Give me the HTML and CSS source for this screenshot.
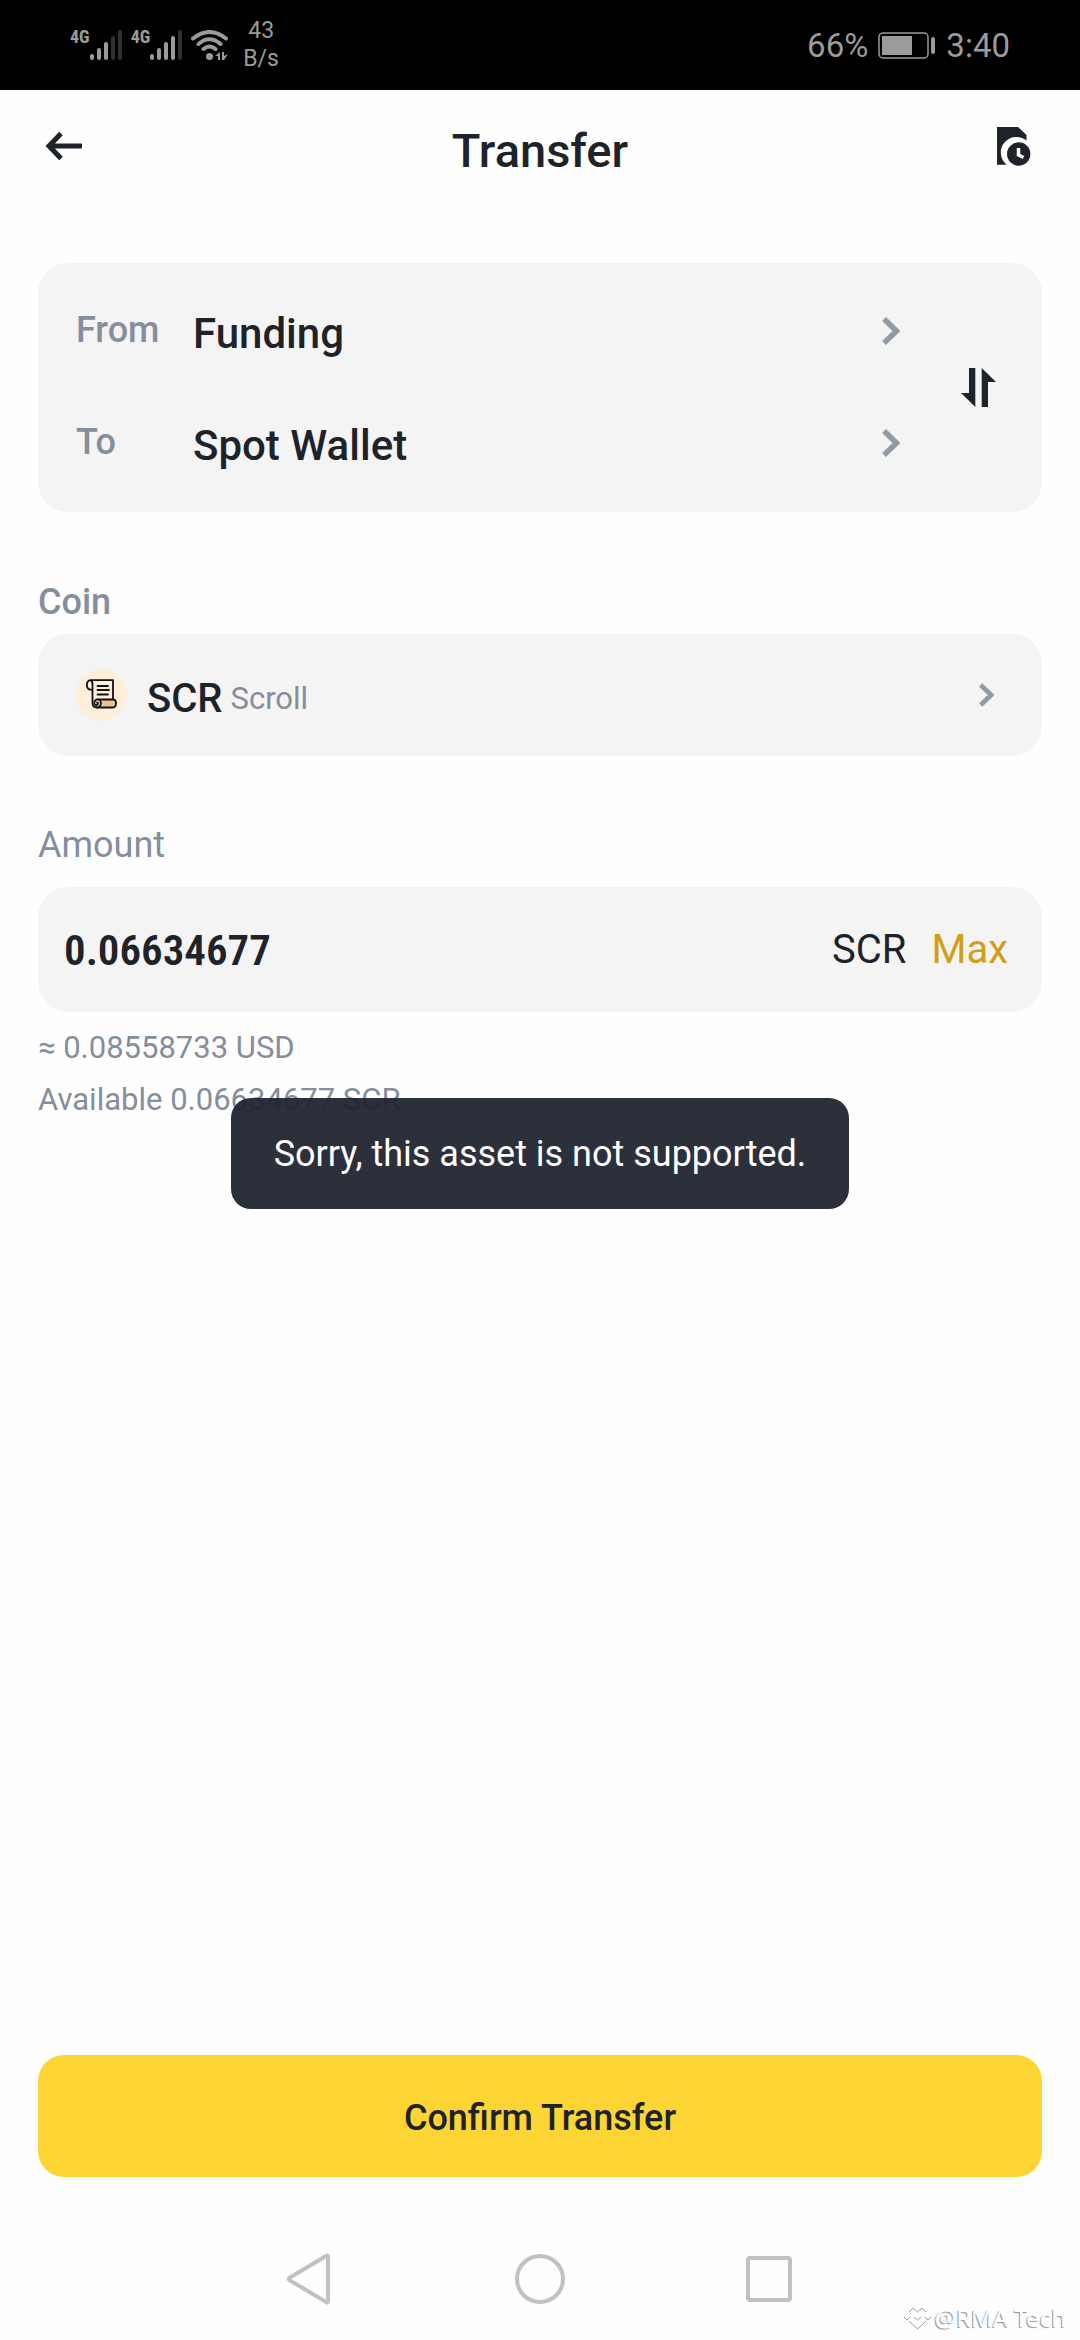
FILE: index.html
```html
<!DOCTYPE html>
<html lang="en">
<head>
<meta charset="utf-8">
<meta name="viewport" content="width=device-width">
<title>Transfer</title>
<link rel="stylesheet" href="styles.css">
</head>
<body>
<div class="screen">
  <div class="status">
    <div class="status-group">
      <div class="signal">
        <span class="network">4G</span>
        <svg width="33" height="30" viewBox="0 0 33 30">
          <g stroke="#9b9b9b" stroke-width="4" stroke-linecap="round"><path d="M2 26v2M9 20v8M16 14v14"/><path stroke="#303030" d="M23 8v20M30 2v26"/></g>
        </svg>
      </div>
      <div class="signal">
        <span class="network">4G</span>
        <svg width="33" height="30" viewBox="0 0 33 30">
          <g stroke="#9b9b9b" stroke-width="4" stroke-linecap="round"><path d="M2 26v2M9 20v8M16 14v14M23 8v20"/><path stroke="#303030" d="M30 2v26"/></g>
        </svg>
      </div>
      <svg width="38" height="30" viewBox="0 0 38 30">
        <g fill="none" stroke="#9b9b9b" stroke-width="4" stroke-linecap="round"><path d="M2 8.500Q18.500-4.500 35 8.500M7.500 14Q18.500 4.500 29.500 14M12.500 19Q18.500 14 24.500 19"/></g>
        <circle cx="18.500" cy="26.500" r="3.500" fill="#9b9b9b"/>
        <path fill="#9b9b9b" d="M24 26l5-4v8h-2v-4zM31 22h2v4l4-2-4 6h-2z"/>
      </svg>
      <div class="speed"><span>43</span><span>B/s</span></div>
    </div>
    <div class="status-group status-right">
      <span>66%</span>
      <svg width="58" height="27" viewBox="0 0 58 27">
        <rect x="1" y="1" width="49" height="25" rx="4" fill="none" stroke="#9b9b9b" stroke-width="1.500"/>
        <rect x="4" y="4" width="30" height="19" fill="#9b9b9b"/>
        <rect x="53" y="5" width="4" height="17" rx="2" fill="#9b9b9b"/>
      </svg>
      <span>3:40</span>
    </div>
  </div>

  <header class="header">
    <button class="icon-button" aria-label="Back">
      <svg width="40" height="38" viewBox="0 0 40 38"><path d="M18 2.500L6 15l12 12.500M5 15h34" fill="none" stroke="#1e2329" stroke-width="5"/></svg>
    </button>
    <h1 class="title">Transfer</h1>
    <button class="icon-button" aria-label="Transfer history">
      <svg width="34" height="46" viewBox="0 0 34 46">
        <path d="M0 0h21l8.500 8v5.500A15 15 0 0 0 9.500 37.700H0z" fill="#1e2329"/>
        <circle cx="21.700" cy="27" r="11.700" fill="#1e2329"/>
        <path d="M21.500 21v7l5 2.500" fill="none" stroke="#fff" stroke-width="3.500"/>
      </svg>
    </button>
  </header>

  <main class="main">
    <section class="card route">
      <div class="route-rows">
        <button class="route-row">
          <span class="route-label">From</span><span class="strong">Funding</span>
          <svg class="push" width="18" height="32" viewBox="0 0 18 32"><path d="M2 2l12.500 12L2 26" fill="none" stroke="#929aa5" stroke-width="5.500"/></svg>
        </button>
        <button class="route-row">
          <span class="route-label">To</span><span class="strong">Spot Wallet</span>
          <svg class="push" width="18" height="32" viewBox="0 0 18 32"><path d="M2 2l12.500 12L2 26" fill="none" stroke="#929aa5" stroke-width="5.500"/></svg>
        </button>
      </div>
      <button class="icon-button" aria-label="Swap accounts">
        <svg width="35" height="39" viewBox="0 0 35 39"><path d="M8 0h6.300v39L0 25h8zM20.700 0L35 14h-8v25h-6.300z" fill="#1e2329"/></svg>
      </button>
    </section>

    <h2 class="field-label medium">Coin</h2>
    <button class="card coin">
      <svg width="52" height="52" viewBox="0 0 52 52">
        <circle cx="26" cy="26" r="26" fill="#ffeeda"/>
        <g fill="none" stroke="#101010" stroke-width="1.800" stroke-linecap="round" stroke-linejoin="round">
          <path d="M15.500 11.200H38V30M15.500 11.200c-5 0-5 10 .5 9.500M15.500 11.200c2.500 1 2 3 2 6V34c0 3 2 4.500 4.500 4.500"/>
          <path fill="#ebc28e" d="M22 38.500h15.500c4.500 0 4.500-8 1-8H23c4 1 4 7-1 8z"/>
          <path d="M23 30.500c-4-.5-5 6-1.500 5.500 2 0 2-2.500.5-2.500M22.500 17H33M22.500 21H34M22.500 25.500H33"/>
        </g>
      </svg>
      <span class="coin-text"><span class="strong">SCR</span><span class="coin-name">Scroll</span></span>
      <svg class="push" width="15" height="24" viewBox="0 0 18 28"><path d="M2 2l12.500 12L2 26" fill="none" stroke="#929aa5" stroke-width="5.500"/></svg>
    </button>

    <label class="field-label" for="amount">Amount</label>
    <div class="card amount">
      <input class="amount-input" id="amount" type="text" inputmode="decimal" value="0.06634677">
      <span>SCR</span>
      <button class="max">Max</button>
    </div>
    <div class="notes">
      <p>≈ 0.08558733 USD</p>
      <p>Available 0.06634677 SCR</p>
    </div>
  </main>

  <div class="action"><button class="confirm">Confirm Transfer</button></div>

  <nav class="nav" aria-label="System">
    <button class="icon-button" aria-label="Back">
      <svg width="64" height="64" viewBox="0 0 64 64"><path d="M50 9.500v45q0 1.500-1.500.7L12 33.500q-2.500-1.500 0-3L48.500 8.800q1.500-.8 1.500.7z" fill="none" stroke="#c1c1c1" stroke-width="4"/></svg>
    </button>
    <button class="icon-button" aria-label="Home">
      <svg width="64" height="64" viewBox="0 0 64 64"><circle cx="32" cy="32" r="23" fill="none" stroke="#c1c1c1" stroke-width="4"/></svg>
    </button>
    <button class="icon-button" aria-label="Recent apps">
      <svg width="64" height="64" viewBox="0 0 64 64"><rect x="10" y="11" width="42" height="42" rx="2" fill="none" stroke="#c1c1c1" stroke-width="4"/></svg>
    </button>
  </nav>

  <div class="toast" role="status">Sorry, this asset is not supported.</div>
  <div class="watermark">
    <svg width="29" height="24" viewBox="0 0 29 24"><path d="M6 6l4-4 4.500 4L19 2l4 4M1 11l3 3 3-3M11 11l3.500 3 3.500-3M22 11l3 3 3-3M6 15l8.500 8 8.500-8" fill="none" stroke="#9a9a9a" stroke-width="1"/></svg>
    <span>@RMA Tech</span>
  </div>
</div>
</body>
</html>
```
FILE: styles.css
```css
* { box-sizing: border-box; }

body {
  margin: 0;
  background: #fefefe;
  color: #1e2329;
  font-family: Roboto, "Noto Sans", sans-serif;
  font-size: 36px;
}

h1, h2, p { margin: 0; font-weight: 400; }

button, input {
  margin: 0;
  padding: 0;
  border: 0;
  background: none;
  color: inherit;
  font: inherit;
  text-align: left;
}

svg { display: block; flex: none; }

.screen {
  position: relative;
  display: flex;
  flex-direction: column;
  min-height: 100vh;
}

.status {
  display: flex;
  align-items: center;
  justify-content: space-between;
  height: 90px;
  padding: 0 70px;
  background: #000;
  color: #9b9b9b;
}

.status-group { display: flex; align-items: center; gap: 8px; }
.status-right { gap: 10px; font-size: 33px; }
.signal { display: flex; align-items: flex-start; }

.network {
  font: 700 18px/14px "Roboto Condensed", Roboto, sans-serif;
}

.speed {
  display: flex;
  flex-direction: column;
  margin-left: 6px;
  font-size: 23px;
  line-height: 28px;
  text-align: center;
}

.header {
  display: flex;
  align-items: center;
  justify-content: space-between;
  height: 120px;
  padding: 0 49px 0 43px;
}

.title { font-size: 47px; font-weight: 500; }

.main {
  display: flex;
  flex: 1;
  flex-direction: column;
  padding: 53px 38px 0;
}

.card {
  display: flex;
  align-items: center;
  border-radius: 30px;
  background: #f4f4f4;
}

.strong { font-size: 42px; font-weight: 500; }
.medium { font-weight: 500; }
.push { margin-left: auto; }

.route { gap: 61px; padding: 0 46px 0 38px; }
.route-rows { display: flex; flex: 1; flex-direction: column; padding: 14px 0 11px; }
.route-row { display: flex; align-items: center; height: 112px; }

.route-label {
  width: 117px;
  padding-bottom: 6px;
  color: #848e9c;
  font-weight: 500;
}

.field-label {
  margin: 70px 0 12px;
  color: #848e9c;
  font-size: 36px;
  line-height: 40px;
}

.coin { gap: 20px; height: 122px; padding: 0 48px 0 37px; }
.coin-text { display: flex; align-items: center; gap: 8px; padding-top: 6px; }
.coin .strong { font-size: 40px; }
.coin-name { color: #848e9c; font-size: 31px; }

.coin + .field-label { margin: 69px 0 22px; }

.amount {
  gap: 25px;
  height: 125px;
  padding: 0 34px 0 26px;
  font-size: 40px;
}

.amount-input {
  flex: 1;
  min-width: 0;
  outline: 0;
  font-family: "Roboto Condensed", Roboto, sans-serif;
  font-size: 43px;
  font-weight: 600;
}

.max { color: #d19e16; }

.notes {
  padding-top: 10px;
  color: #848e9c;
  font-size: 31px;
  line-height: 52px;
}

.action { padding: 0 38px; }

.confirm {
  width: 100%;
  height: 122px;
  padding-top: 4px;
  border-radius: 26px;
  background: #fcd535;
  font-weight: 500;
  text-align: center;
}

.nav {
  display: flex;
  justify-content: center;
  gap: 166px;
  padding: 70px 0 29px;
}

.toast {
  position: absolute;
  top: 1098px;
  right: 0;
  left: 0;
  width: fit-content;
  margin: 0 auto;
  padding: 2px 43px 0;
  border-radius: 20px;
  background: rgba(32, 37, 48, 0.95);
  color: #fff;
  line-height: 109px;
}

.watermark {
  position: absolute;
  right: 14px;
  bottom: 8px;
  display: flex;
  align-items: center;
  gap: 3px;
  color: #fff;
  font-family: "Noto Sans", sans-serif;
  font-size: 24px;
  line-height: 28px;
  text-shadow: -1px 1px 1px #909090;
}
```
